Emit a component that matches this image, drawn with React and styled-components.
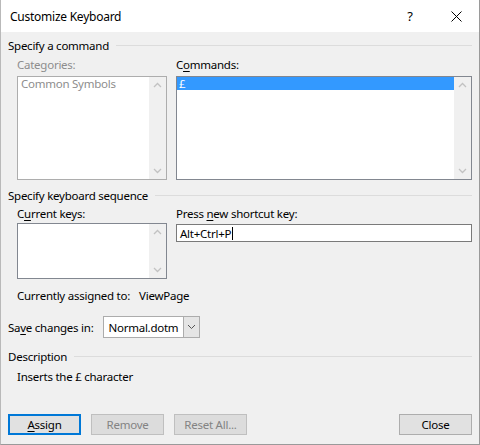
import React from "react";
import styled, { createGlobalStyle } from "styled-components";

const Global = createGlobalStyle`
  html, body { margin: 0; padding: 0; background: #f0f0f0; }
  body {
    font-family: "Segoe UI", "Noto Sans", "Open Sans", sans-serif;
    font-size: 11.5px;
    letter-spacing: -0.25px;
    color: #000;
  }
  * { box-sizing: border-box; }
`;

const Window = styled.div`
  width: 480px;
  height: 445px;
  background: #f0f0f0;
  border-left: 1px solid #b9b9b9;
  border-right: 1px solid #9a9a9a;
  border-bottom: 1px solid #9a9a9a;
  display: flex;
  flex-direction: column;
  overflow: hidden;
`;

const TitleBar = styled.div`
  height: 32px;
  background: #fff;
  display: flex;
  align-items: center;
  padding-left: 9px;
`;

const Title = styled.div`
  font-size: 12px;
  flex: 1;
  color: #000;
`;

const TitleButton = styled.div`
  width: 46px;
  height: 32px;
  display: flex;
  align-items: center;
  justify-content: center;
  font-size: 13px;
`;

const Body = styled.div`
  padding: 5px 7px 0 7px;
  display: flex;
  flex-direction: column;
`;

const SectionHeader = styled.div`
  display: flex;
  align-items: center;
  height: 16px;
  margin-top: ${(p) => p.$mt || 0}px;
`;

const SectionLabel = styled.span`
  white-space: nowrap;
`;

const Rule = styled.div`
  flex: 1;
  height: 1px;
  background: #dcdcdc;
  margin-left: 7px;
`;

const Columns = styled.div`
  display: grid;
  grid-template-columns: 150px 296px;
  column-gap: 9px;
  padding-left: 9px;
  margin-top: ${(p) => p.$mt || 0}px;
`;

const Col = styled.div`
  display: flex;
  flex-direction: column;
`;

const FieldLabel = styled.div`
  height: 16px;
  line-height: 16px;
  color: ${(p) => (p.$disabled ? "#8d8d8d" : "#000")};
  margin-bottom: ${(p) => p.$mb || 3}px;
`;

const U = styled.span`
  text-decoration: underline;
  text-underline-offset: 2px;
`;

const ListBox = styled.div`
  height: ${(p) => p.$h}px;
  border: 1px solid ${(p) => (p.$disabled ? "#adadad" : "#828790")};
  background: #fff;
  display: flex;
`;

const ListItems = styled.div`
  flex: 1;
  display: flex;
  flex-direction: column;
`;

const ListItem = styled.div`
  height: 13px;
  line-height: 13px;
  padding-left: ${(p) => (p.$selected ? 2 : 3)}px;
  background: ${(p) => (p.$selected ? "#3399ff" : "transparent")};
  color: ${(p) => (p.$selected ? "#fff" : p.$disabled ? "#8d8d8d" : "#000")};
`;

const ScrollBar = styled.div`
  width: 17px;
  background: #f0f0f0;
  display: flex;
  flex-direction: column;
  justify-content: space-between;
  align-items: center;
  padding: 5px 0 5px 0;
`;

const Input = styled.div`
  height: 18px;
  border: 1px solid #7a7a7a;
  background: #fff;
  display: flex;
  align-items: center;
  padding-left: 3px;
  margin-top: 1px;
`;

const Caret = styled.span`
  display: inline-block;
  width: 1px;
  height: 13px;
  background: #000;
  margin-left: 1px;
`;

const InfoRow = styled.div`
  display: flex;
  align-items: center;
  height: 16px;
  padding-left: ${(p) => p.$indent || 0}px;
  margin-top: ${(p) => p.$mt || 0}px;
`;

const InfoValue = styled.span`
  margin-left: 9px;
`;

const SaveRow = styled.div`
  display: flex;
  align-items: center;
  margin-top: ${(p) => p.$mt || 0}px;
  height: 22px;
`;

const Select = styled.div`
  margin-left: 10px;
  width: 97px;
  height: 22px;
  border: 1px solid #acacac;
  background: #fff;
  display: flex;
`;

const SelectText = styled.div`
  flex: 1;
  display: flex;
  align-items: center;
  padding-left: 4px;
`;

const SelectButton = styled.div`
  width: 16px;
  background: #e5e5e5;
  border-left: 1px solid #acacac;
  display: flex;
  align-items: center;
  justify-content: center;
`;

const Footer = styled.div`
  margin-top: auto;
  display: flex;
  padding: 0 7px 9px 7px;
  gap: 10px;
`;

const Button = styled.div`
  width: 73px;
  height: 21px;
  display: flex;
  align-items: center;
  justify-content: center;
  background: ${(p) => (p.$disabled ? "#dcdcdc" : "#e1e1e1")};
  border: 1px solid ${(p) => (p.$default ? "#0078d7" : p.$disabled ? "#bfbfbf" : "#adadad")};
  box-shadow: ${(p) => (p.$default ? "inset 0 0 0 1px #0078d7" : "none")};
  color: ${(p) => (p.$disabled ? "#838383" : "#000")};
  margin-left: ${(p) => (p.$push ? "auto" : "0")};
`;

const Chevron = ({ up }) => (
  <svg width="9" height="6" viewBox="0 0 9 6">
    <polyline
      points={up ? "1,5 4.5,1.5 8,5" : "1,1 4.5,4.5 8,1"}
      fill="none"
      stroke="#c2c2c2"
      strokeWidth="1.3"
    />
  </svg>
);

const Scroll = () => (
  <ScrollBar>
    <Chevron up />
    <Chevron />
  </ScrollBar>
);

export default function App() {
  return (
    <>
      <Global />
      <Window>
        <TitleBar>
          <Title>Customize Keyboard</Title>
          <TitleButton>?</TitleButton>
          <TitleButton>
            <svg width="11" height="11" viewBox="0 0 11 11">
              <path d="M0.5 0.5 L10.5 10.5 M10.5 0.5 L0.5 10.5" stroke="#000" strokeWidth="1" />
            </svg>
          </TitleButton>
        </TitleBar>
        <Body>
          <SectionHeader>
            <SectionLabel>Specify a command</SectionLabel>
            <Rule />
          </SectionHeader>
          <Columns $mt={4}>
            <Col>
              <FieldLabel $disabled>Categories:</FieldLabel>
              <ListBox $h={104} $disabled>
                <ListItems>
                  <ListItem $disabled>Common Symbols</ListItem>
                </ListItems>
                <Scroll />
              </ListBox>
            </Col>
            <Col>
              <FieldLabel>
                C<U>o</U>mmands:
              </FieldLabel>
              <ListBox $h={104}>
                <ListItems>
                  <ListItem $selected>£</ListItem>
                </ListItems>
                <Scroll />
              </ListBox>
            </Col>
          </Columns>
          <SectionHeader $mt={7}>
            <SectionLabel>Specify keyboard sequence</SectionLabel>
            <Rule />
          </SectionHeader>
          <Columns $mt={3}>
            <Col>
              <FieldLabel $mb={1}>
                C<U>u</U>rrent keys:
              </FieldLabel>
              <ListBox $h={56}>
                <ListItems />
                <Scroll />
              </ListBox>
            </Col>
            <Col>
              <FieldLabel $mb={1}>
                Press <U>n</U>ew shortcut key:
              </FieldLabel>
              <Input>
                Alt+Ctrl+P<Caret />
              </Input>
            </Col>
          </Columns>
          <InfoRow $indent={9} $mt={8}>
            Currently assigned to:<InfoValue>ViewPage</InfoValue>
          </InfoRow>
          <SaveRow $mt={13}>
            Sa<U>v</U>e changes in:
            <Select>
              <SelectText>Normal.dotm</SelectText>
              <SelectButton>
                <svg width="9" height="6" viewBox="0 0 9 6">
                  <polyline points="1,1 4.5,4.5 8,1" fill="none" stroke="#555" strokeWidth="1" />
                </svg>
              </SelectButton>
            </Select>
          </SaveRow>
          <SectionHeader $mt={10}>
            <SectionLabel>Description</SectionLabel>
            <Rule />
          </SectionHeader>
          <InfoRow $indent={9} $mt={4}>
            Inserts the £ character
          </InfoRow>
        </Body>
        <Footer>
          <Button $default>
            <span>
              <U>A</U>ssign
            </span>
          </Button>
          <Button $disabled>Remove</Button>
          <Button $disabled>Reset All...</Button>
          <Button $push>Close</Button>
        </Footer>
      </Window>
    </>
  );
}
